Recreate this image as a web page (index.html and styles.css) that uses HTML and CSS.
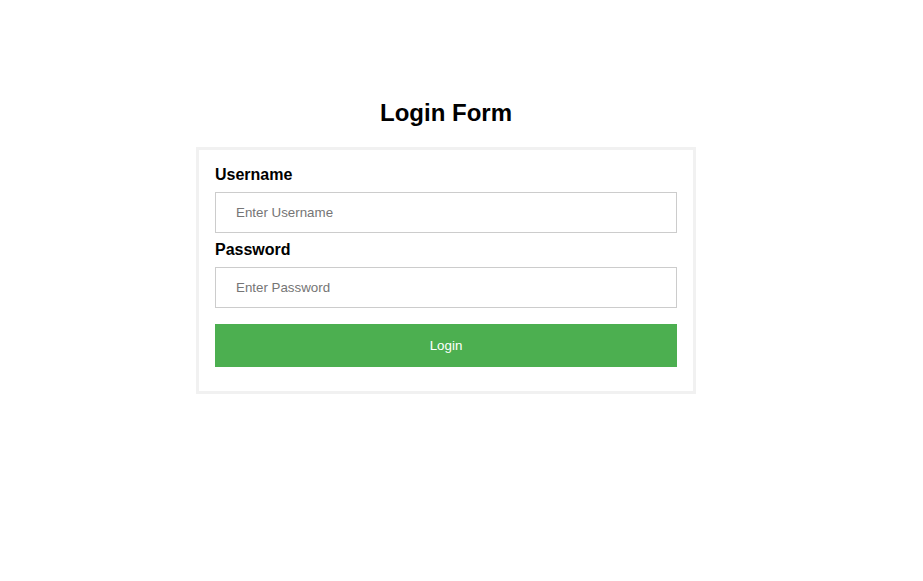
FILE: index.html
```html
<!DOCTYPE html>
<html>
<head>
<meta charset="utf-8">
<link rel="stylesheet" href="styles.css">
</head>
<body>
<div class="page">
  <h2 class="title">Login Form</h2>
  <form class="card">
    <label class="label" for="uname">Username</label>
    <input class="field" type="text" id="uname" placeholder="Enter Username">
    <label class="label" for="psw">Password</label>
    <input class="field" type="password" id="psw" placeholder="Enter Password">
    <button class="btn" type="button">Login</button>
  </form>
</div>
</body>
</html>
```
FILE: styles.css
```css
html, body {
  margin: 0;
  padding: 0;
  background: #fff;
}
body {
  font-family: "Liberation Sans", Arial, sans-serif;
  color: #000;
}
.page {
  width: 500px;
  margin-left: 196px;
  padding-top: 99px;
  display: flex;
  flex-direction: column;
}
.title {
  margin: 0 0 20px 0;
  font-size: 24px;
  line-height: 28px;
  font-weight: bold;
  text-align: center;
}
.card {
  box-sizing: border-box;
  border: 3px solid #f1f1f1;
  padding: 16px;
  display: flex;
  flex-direction: column;
}
.label {
  font-size: 16px;
  line-height: 18px;
  font-weight: bold;
  display: block;
}
.field {
  display: block;
  width: 100%;
  box-sizing: border-box;
  margin: 8px 0;
  padding: 12px 20px;
  border: 1px solid #ccc;
  font-family: "Liberation Sans", Arial, sans-serif;
  font-size: 13.33px;
  line-height: 15px;
  height: 41px;
  outline: none;
}
.field::placeholder {
  color: #757575;
}
.btn {
  display: block;
  width: 100%;
  margin: 8px 0;
  height: 43px;
  padding: 14px 20px;
  border: none;
  background: #4caf50;
  color: #fff;
  font-family: "Liberation Sans", Arial, sans-serif;
  font-size: 13.33px;
  font-weight: normal;
  line-height: 15px;
  cursor: pointer;
}
```
